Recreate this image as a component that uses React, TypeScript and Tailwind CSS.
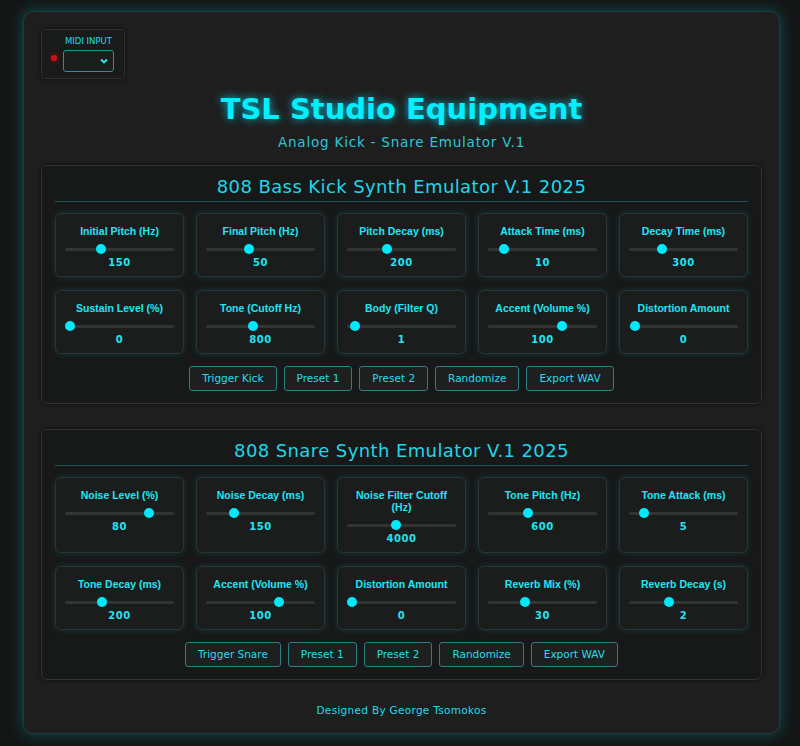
import React from "react";

type Ctl = { label: string; value: string; pct: number };

const kick: Ctl[] = [
  { label: "Initial Pitch (Hz)", value: "150", pct: 0.31 },
  { label: "Final Pitch (Hz)", value: "50", pct: 0.38 },
  { label: "Pitch Decay (ms)", value: "200", pct: 0.35 },
  { label: "Attack Time (ms)", value: "10", pct: 0.11 },
  { label: "Decay Time (ms)", value: "300", pct: 0.28 },
  { label: "Sustain Level (%)", value: "0", pct: 0 },
  { label: "Tone (Cutoff Hz)", value: "800", pct: 0.42 },
  { label: "Body (Filter Q)", value: "1", pct: 0.03 },
  { label: "Accent (Volume %)", value: "100", pct: 0.7 },
  { label: "Distortion Amount", value: "0", pct: 0.01 },
];

const snare: Ctl[] = [
  { label: "Noise Level (%)", value: "80", pct: 0.8 },
  { label: "Noise Decay (ms)", value: "150", pct: 0.23 },
  { label: "Noise Filter Cutoff (Hz)", value: "4000", pct: 0.44 },
  { label: "Tone Pitch (Hz)", value: "600", pct: 0.35 },
  { label: "Tone Attack (ms)", value: "5", pct: 0.1 },
  { label: "Tone Decay (ms)", value: "200", pct: 0.32 },
  { label: "Accent (Volume %)", value: "100", pct: 0.69 },
  { label: "Distortion Amount", value: "0", pct: 0 },
  { label: "Reverb Mix (%)", value: "30", pct: 0.32 },
  { label: "Reverb Decay (s)", value: "2", pct: 0.35 },
];

const labelFont = { fontFamily: '"Liberation Sans", Arial, sans-serif' };

function Card({ c }: { c: Ctl }) {
  const wrap = c.label.length > 20;
  return (
    <div className="flex flex-col items-center rounded-[6px] border border-[#2a3535] bg-[#1b1c1c] px-[9px] pt-[11px] pb-[7px] shadow-[0_0_6px_rgba(0,200,210,0.18)]">
      <div
        className={`text-center text-[10.5px] font-bold leading-[12px] text-[#1fe6f5] ${
          wrap ? "w-[104px]" : ""
        }`}
        style={labelFont}
      >
        {c.label}
      </div>
      <div className="relative mt-[7px] h-[10px] w-full">
        <div className="absolute left-0 right-0 top-[4px] h-[3px] rounded-full bg-[#333535]" />
        <div
          className="absolute top-0 h-[10px] w-[10px] rounded-full bg-[#00eaff]"
          style={{ left: `calc(${c.pct} * (100% - 10px))` }}
        />
      </div>
      <div className="mt-[3px] text-[10px] font-bold leading-[12px] text-[#22e4f2] tracking-[0.5px]">
        {c.value}
      </div>
    </div>
  );
}

function Btn({ t }: { t: string }) {
  return (
    <button className="h-[25px] rounded-[3px] border border-[#2b7f85] bg-[#1e1f1f] px-[12px] text-[10.5px] leading-none text-[#28dced]">
      {t}
    </button>
  );
}

function Section({
  title,
  ctls,
  buttons,
}: {
  title: string;
  ctls: Ctl[];
  buttons: string[];
}) {
  return (
    <div className="rounded-[6px] border border-[#2e3333] bg-[#171818] px-[13px] pt-[11px] pb-[12px] shadow-[0_0_4px_rgba(0,0,0,0.6)]">
      <div className="text-center text-[18px] leading-[20px] text-[#1fd6ea] tracking-[0.4px]">
        {title}
      </div>
      <div className="mt-[4px] h-px bg-[#1f5256]" />
      <div className="mt-[11px] grid grid-cols-5 gap-x-[12px] gap-y-[13px]">
        {ctls.map((c) => (
          <Card key={c.label} c={c} />
        ))}
      </div>
      <div className="mt-[12px] flex justify-center gap-[7px]">
        {buttons.map((b) => (
          <Btn key={b} t={b} />
        ))}
      </div>
    </div>
  );
}

export default function App() {
  return (
    <div
      className="min-h-[746px] w-full bg-[#141616] pt-[11px]"
      style={{ fontFamily: '"DejaVu Sans", "Liberation Sans", sans-serif' }}
    >
      <div className="ml-[23px] w-[757px] rounded-[10px] border border-[#1f3c3e] bg-[#1e1e1e] px-[17px] pt-[17px] pb-[16px] shadow-[0_0_14px_rgba(0,190,200,0.35)]">
        <div className="flex">
          <div className="flex items-center gap-[6px] rounded-[4px] border border-[#2d2f2f] bg-[#191a1a] pl-[9px] pr-[10px] pt-[6px] pb-[6px] shadow-[0_0_4px_rgba(0,0,0,0.6)]">
            <div className="mt-[8px] h-[6px] w-[6px] rounded-full bg-[#c8141a] shadow-[0_0_4px_rgba(255,0,0,0.7)]" />
            <div className="flex flex-col items-center">
              <div className="text-[8.5px] leading-[11px] text-[#22dcec]">MIDI INPUT</div>
              <div className="mt-[3px] flex h-[22px] w-[51px] items-center justify-end rounded-[3px] border border-[#2a8f96] bg-[#1c1d1d] pr-[5px]">
                <svg width="8" height="6" viewBox="0 0 8 6">
                  <path d="M1 1.5 L4 4.5 L7 1.5" stroke="#2fe6f5" strokeWidth="1.8" fill="none" />
                </svg>
              </div>
            </div>
          </div>
        </div>
        <div className="mt-[13px] text-center text-[29px] font-bold leading-[34px] text-[#00f0ff] [text-shadow:0_0_8px_rgba(0,230,255,0.8)]">
          TSL Studio Equipment
        </div>
        <div className="mt-[8px] text-center text-[13.5px] leading-[16px] text-[#2ec6d6] tracking-[0.8px]">
          Analog Kick - Snare Emulator V.1
        </div>
        <div className="mt-[15px] flex flex-col gap-[25px]">
          <Section
            title="808 Bass Kick Synth Emulator V.1 2025"
            ctls={kick}
            buttons={["Trigger Kick", "Preset 1", "Preset 2", "Randomize", "Export WAV"]}
          />
          <Section
            title="808 Snare Synth Emulator V.1 2025"
            ctls={snare}
            buttons={["Trigger Snare", "Preset 1", "Preset 2", "Randomize", "Export WAV"]}
          />
        </div>
        <div className="mt-[23px] text-center text-[10.5px] leading-[14px] text-[#25d8ea] tracking-[0.3px]">
          Designed By George Tsomokos
        </div>
      </div>
    </div>
  );
}
